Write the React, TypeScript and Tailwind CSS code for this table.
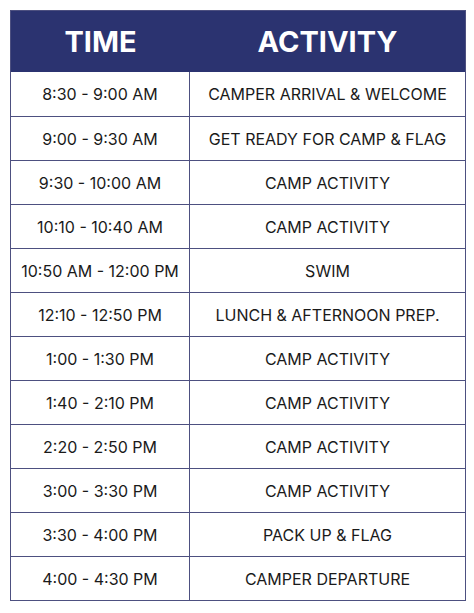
const ROWS: [string, string][] = [
  ["8:30 - 9:00 AM", "CAMPER ARRIVAL & WELCOME"],
  ["9:00 - 9:30 AM", "GET READY FOR CAMP & FLAG"],
  ["9:30 - 10:00 AM", "CAMP ACTIVITY"],
  ["10:10 - 10:40 AM", "CAMP ACTIVITY"],
  ["10:50 AM - 12:00 PM", "SWIM"],
  ["12:10 - 12:50 PM", "LUNCH & AFTERNOON PREP."],
  ["1:00 - 1:30 PM", "CAMP ACTIVITY"],
  ["1:40 - 2:10 PM", "CAMP ACTIVITY"],
  ["2:20 - 2:50 PM", "CAMP ACTIVITY"],
  ["3:00 - 3:30 PM", "CAMP ACTIVITY"],
  ["3:30 - 4:00 PM", "PACK UP & FLAG"],
  ["4:00 - 4:30 PM", "CAMPER DEPARTURE"],
];

export default function App() {
  return (
    <div className="w-[474px] h-[613px] bg-white pt-[10px] pl-[10px]" style={{ fontFamily: "Inter, 'Liberation Sans', sans-serif" }}>
      <div className="w-[456px] border border-[#4d5080]">
        <div className="flex h-[61px] bg-[#2b3370] text-white font-bold text-[29px]">
          <div className="w-[179px] flex items-center justify-center">TIME</div>
          <div className="flex-1 flex items-center justify-center">ACTIVITY</div>
        </div>
        {ROWS.map(([time, activity], i) => (
          <div key={i} className={`flex h-[44px] text-[16px] text-[#1a1a1a] ${i > 0 ? "border-t border-[#4d5080]" : ""}`}>
            <div className="w-[179px] flex items-center justify-center border-r border-[#4d5080]">{time}</div>
            <div className="flex-1 flex items-center justify-center">{activity}</div>
          </div>
        ))}
      </div>
    </div>
  );
}
